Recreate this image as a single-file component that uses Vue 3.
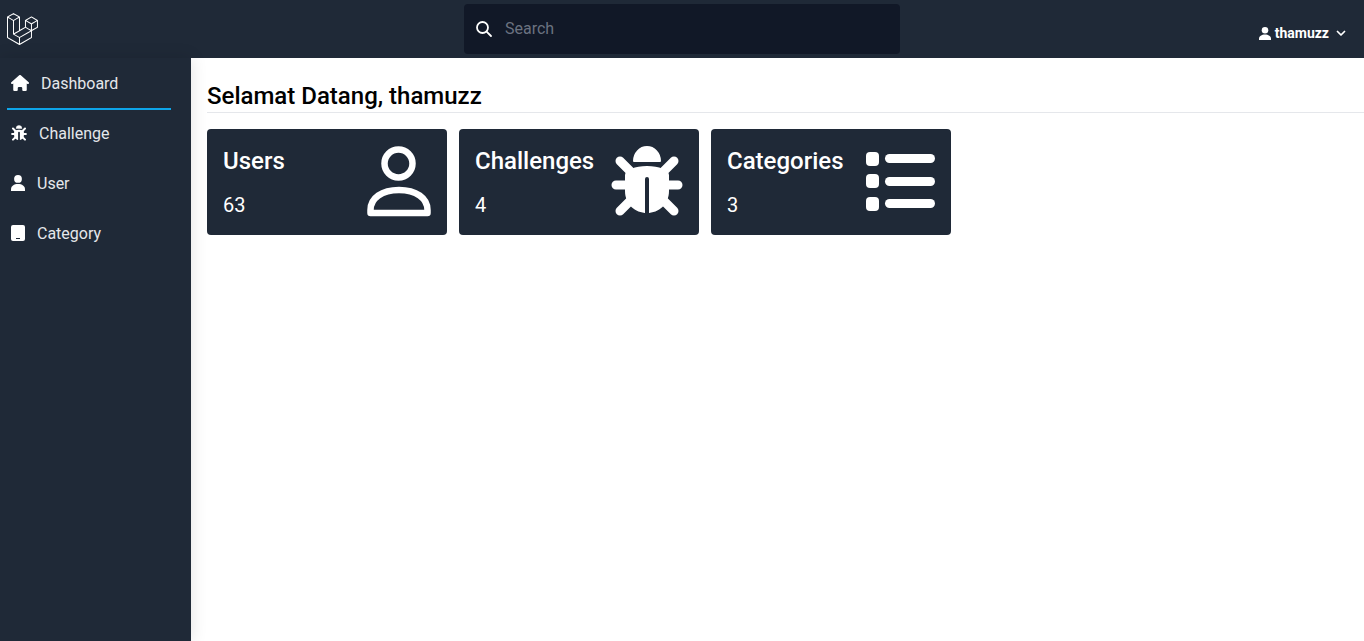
<template>
  <div class="page">
    <header class="topbar">
      <div class="logo">
        <svg width="31" height="32" viewBox="0 0 62 64" fill="#fff">
          <path fill-rule="evenodd" d="M61.8548 14.6253C61.8778 14.7102 61.8895 14.7978 61.8897 14.8858V28.5615C61.8898 28.737 61.8434 28.9095 61.7554 29.0614C61.6675 29.2132 61.5409 29.3392 61.3887 29.4265L49.9104 36.0351V49.1337C49.9104 49.4902 49.7209 49.8192 49.4118 49.9987L25.4519 63.7916C25.3971 63.8227 25.3372 63.8427 25.2774 63.8639C25.255 63.8714 25.2338 63.8851 25.2101 63.8913C25.0426 63.9354 24.8666 63.9354 24.6991 63.8913C24.6716 63.8838 24.6467 63.8689 24.6205 63.8589C24.5657 63.8389 24.5084 63.8215 24.456 63.7916L0.501061 49.9987C0.348882 49.9113 0.222437 49.7853 0.134469 49.6334C0.0465019 49.4816 0.000120578 49.3092 0 49.1337L0 8.10652C0 8.01678 0.0124642 7.92953 0.0348998 7.84477C0.0423783 7.8161 0.0598282 7.78993 0.0697995 7.76126C0.0884958 7.70891 0.105946 7.65531 0.133367 7.6067C0.152063 7.5743 0.179485 7.54812 0.20192 7.51821C0.230588 7.47832 0.256763 7.43719 0.290416 7.40229C0.319084 7.37362 0.356476 7.35243 0.388883 7.32751C0.425029 7.29759 0.457436 7.26518 0.498568 7.2415L12.4779 0.345059C12.6296 0.257786 12.8015 0.211853 12.9765 0.211853C13.1515 0.211853 13.3234 0.257786 13.475 0.345059L25.4531 7.2415H25.4556C25.4955 7.26643 25.5292 7.29759 25.5653 7.32626C25.5977 7.35119 25.6339 7.37362 25.6625 7.40104C25.6974 7.43719 25.7224 7.47832 25.7523 7.51821C25.7735 7.54812 25.8021 7.5743 25.8196 7.6067C25.8483 7.65656 25.8645 7.70891 25.8844 7.76126C25.8944 7.78993 25.9118 7.8161 25.9193 7.84602C25.9423 7.93096 25.954 8.01853 25.9542 8.10652V33.7317L35.9355 27.9844V14.8846C35.9355 14.7973 35.948 14.7088 35.9704 14.6253C35.9792 14.5954 35.9954 14.5692 36.0053 14.5405C36.0253 14.4882 36.0427 14.4346 36.0702 14.386C36.0888 14.3536 36.1163 14.3274 36.1375 14.2975C36.1674 14.2576 36.1923 14.2165 36.2272 14.1816C36.2559 14.1529 36.292 14.1317 36.3244 14.1068C36.3618 14.0769 36.3942 14.0445 36.4341 14.0208L48.4147 7.12434C48.5663 7.03694 48.7383 6.99094 48.9133 6.99094C49.0883 6.99094 49.2602 7.03694 49.4118 7.12434L61.3899 14.0208C61.4323 14.0457 61.4647 14.0769 61.5021 14.1055C61.5333 14.1305 61.5694 14.1529 61.5981 14.1803C61.633 14.2165 61.6579 14.2576 61.6878 14.2975C61.7103 14.3274 61.7377 14.3536 61.7551 14.386C61.7838 14.4346 61.8 14.4882 61.8199 14.5405C61.8312 14.5692 61.8474 14.5954 61.8548 14.6253ZM59.893 27.9844V16.6121L55.7013 19.0252L49.9104 22.3593V33.7317L59.8942 27.9844H59.893ZM47.9149 48.5566V37.1768L42.2187 40.4299L25.953 49.7133V61.2003L47.9149 48.5566ZM1.99677 9.83281V48.5566L23.9562 61.199V49.7145L12.4841 43.2219L12.4804 43.2194L12.4754 43.2169C12.4368 43.1945 12.4044 43.1621 12.3682 43.1347C12.3371 43.1097 12.3009 43.0898 12.2735 43.0624L12.271 43.0586C12.2386 43.0275 12.2162 42.9888 12.1887 42.9539C12.1638 42.9203 12.1339 42.8916 12.114 42.8567L12.1127 42.853C12.0903 42.8156 12.0766 42.7707 12.0604 42.7283C12.0442 42.6909 12.023 42.656 12.013 42.6161C12.0005 42.5688 11.998 42.5177 11.9931 42.4691C11.9881 42.4317 11.9781 42.3943 11.9781 42.3569V15.5801L6.18848 12.2446L1.99677 9.83281ZM12.9777 2.36177L2.99764 8.10652L12.9752 13.8513L22.9541 8.10527L12.9752 2.36177H12.9777ZM18.1678 38.2138L23.9574 34.8809V9.83281L19.7657 12.2459L13.9749 15.5801V40.6281L18.1678 38.2138ZM48.9133 9.14105L38.9344 14.8858L48.9133 20.6305L58.8909 14.8846L48.9133 9.14105ZM47.9149 22.3593L42.124 19.0252L37.9323 16.6121V27.9844L43.7219 31.3174L47.9149 33.7317V22.3593ZM24.9533 47.987L39.59 39.631L46.9065 35.4555L36.9352 29.7145L25.4544 36.3242L14.9907 42.3482L24.9533 47.987Z" />
        </svg>
      </div>
      <label class="search">
        <svg width="18" height="18" viewBox="0 0 18 18" fill="none" stroke="#fff" stroke-width="1.8" stroke-linecap="round">
          <circle cx="7.5" cy="7.5" r="5.5" />
          <path d="M11.6 11.6L16 16" />
        </svg>
        <input type="text" placeholder="Search" />
      </label>
      <div class="account">
        <svg width="12" height="13" viewBox="0 0 14 15" fill="#fff">
          <circle cx="7" cy="3.8" r="3.8" />
          <path d="M0 15v-1.5C0 10.5 3 8.6 7 8.6s7 1.9 7 4.9V15z" />
        </svg>
        <span class="account-name">thamuzz</span>
        <svg class="chevron" width="10" height="6" viewBox="0 0 10 6" fill="none" stroke="#fff" stroke-width="1.7" stroke-linecap="round" stroke-linejoin="round">
          <path d="M1.5 1.500L5 5l3.500-3.500" />
        </svg>
      </div>
    </header>

    <div class="body">
      <aside class="sidebar">
        <a class="nav-item active">
          <svg width="18" height="16" viewBox="2 2 16 16" preserveAspectRatio="none" fill="#fff">
            <path d="M10.707 2.293a1 1 0 00-1.414 0l-7 7a1 1 0 001.414 1.414L4 10.414V17a1 1 0 001 1h2a1 1 0 001-1v-2a1 1 0 011-1h2a1 1 0 011 1v2a1 1 0 001 1h2a1 1 0 001-1v-6.586l.293.293a1 1 0 001.414-1.414l-7-7z" />
          </svg>
          <span>Dashboard</span>
        </a>
        <a class="nav-item">
          <svg width="16" height="16" viewBox="0 0 72 72">
            <path fill="#fff" stroke="#fff" stroke-width="2" stroke-linejoin="round" d="M23 16a13 14 0 0 1 26 0z" />
            <path fill="#fff" fill-rule="evenodd" d="M14 30c0-5 10-9 22-9s22 4 22 9v16c0 13-10 22-22 22s-22-9-22-22zM32 34v34h8V34a4 4 0 0 0-8 0z" />
            <path stroke="#fff" stroke-width="9" stroke-linecap="round" d="M9 16l11 11M63 16L52 27M5 40h13M67 40H54M9 66l11-11M63 66L52 55" />
          </svg>
          <span>Challenge</span>
        </a>
        <a class="nav-item">
          <svg width="14" height="16" viewBox="0 0 14 16" fill="#fff">
            <circle cx="7" cy="3.9" r="3.9" />
            <path d="M0 16v-1.6C0 11 3 9 7 9s7 2 7 5.4V16z" />
          </svg>
          <span>User</span>
        </a>
        <a class="nav-item">
          <svg width="14" height="16" viewBox="0 0 14 16">
            <path fill="#fff" fill-rule="evenodd" d="M2 0h10a2 2 0 0 1 2 2v12a2 2 0 0 1-2 2H2a2 2 0 0 1-2-2V2a2 2 0 0 1 2-2zM5 13v1h4v-1z" />
          </svg>
          <span>Category</span>
        </a>
      </aside>

      <main class="main">
        <h1 class="greeting">Selamat Datang, thamuzz</h1>
        <div class="cards">
          <div class="card">
            <div>
              <div class="card-title">Users</div>
              <div class="card-value">63</div>
            </div>
            <svg width="64" height="72" viewBox="0 0 64 72" fill="none" stroke="#fff" stroke-width="6.5" stroke-linejoin="round">
              <circle cx="31.5" cy="18.5" r="14" />
              <path d="M3.500 68v-3C3.500 53 15 45 32 45s28.500 8 28.500 20v3z" />
            </svg>
          </div>
          <div class="card">
            <div>
              <div class="card-title">Challenges</div>
              <div class="card-value">4</div>
            </div>
            <svg width="72" height="72" viewBox="0 0 72 72">
              <path fill="#fff" stroke="#fff" stroke-width="2" stroke-linejoin="round" d="M23 16a13 14 0 0 1 26 0z" />
              <path fill="#fff" fill-rule="evenodd" d="M14 30c0-5 10-9 22-9s22 4 22 9v16c0 13-10 22-22 22s-22-9-22-22zM34 34v34h4V34a2 2 0 0 0-4 0z" />
              <path stroke="#fff" stroke-width="9" stroke-linecap="round" d="M9 16l11 11M63 16L52 27M5 40h13M67 40H54M9 66l11-11M63 66L52 55" />
            </svg>
          </div>
          <div class="card">
            <div>
              <div class="card-title">Categories</div>
              <div class="card-value">3</div>
            </div>
            <svg width="70" height="72" viewBox="0 0 70 72" fill="#fff">
              <rect x="1" y="7" width="13" height="14" rx="4" />
              <rect x="1" y="29" width="13" height="14" rx="4" />
              <rect x="1" y="52" width="13" height="14" rx="4" />
              <rect x="20" y="9" width="50" height="9" rx="4.5" />
              <rect x="20" y="32" width="50" height="9" rx="4.5" />
              <rect x="20" y="54" width="50" height="9" rx="4.5" />
            </svg>
          </div>
        </div>
      </main>
    </div>
  </div>
</template>

<script setup>
</script>

<style>
html,
body {
  margin: 0;
  background: #fff;
}
</style>

<style scoped>
.page {
  height: 641px;
  display: flex;
  flex-direction: column;
  overflow: hidden;
  font-family: Roboto, "Liberation Sans", sans-serif;
}

.topbar {
  height: 58px;
  flex: none;
  display: grid;
  grid-template-columns: 1fr 436px 1fr;
  background: #1f2937;
  color: #fff;
}

.logo {
  padding: 13px 0 0 7px;
}

.logo svg {
  display: block;
}

.search {
  height: 50px;
  margin-top: 4px;
  display: flex;
  align-items: center;
  gap: 12px;
  padding-left: 11px;
  background: #111827;
  border-radius: 4px;
}

.search input {
  flex: 1;
  min-width: 0;
  border: 0;
  outline: 0;
  padding: 0 0 2px;
  background: transparent;
  color: #fff;
  font: 400 16px Roboto, sans-serif;
}

.search input::placeholder {
  color: #6b7280;
}

.account {
  justify-self: end;
  align-self: start;
  display: flex;
  align-items: center;
  margin-top: 25px;
  padding-right: 18px;
  height: 16px;
}

.account-name {
  margin-left: 4px;
  font-size: 14px;
  font-weight: 700;
}

.chevron {
  margin-left: 7px;
}

.body {
  flex: 1;
  display: flex;
  min-height: 0;
}

.sidebar {
  width: 191px;
  flex: none;
  padding-left: 7px;
  box-sizing: border-box;
  background: #1f2937;
  box-shadow: 0 0 16px rgba(0, 0, 0, 0.12);
}

.nav-item {
  display: flex;
  align-items: center;
  gap: 12px;
  width: 164px;
  height: 50px;
  padding-left: 4px;
  box-sizing: border-box;
  color: #e5e7eb;
  font-size: 16px;
}

.nav-item.active {
  box-shadow: 0 2px 0 #0ea5e9;
}

.main {
  flex: 1;
  min-width: 0;
  padding-left: 16px;
}

.greeting {
  margin: 0;
  height: 55px;
  padding-top: 23px;
  box-sizing: border-box;
  border-bottom: 1px solid #e5e7eb;
  color: #000;
  font-size: 24px;
  font-weight: 500;
  line-height: 30px;
}

.cards {
  display: flex;
  gap: 12px;
  margin-top: 16px;
}

.card {
  width: 240px;
  height: 106px;
  padding: 16px;
  box-sizing: border-box;
  display: flex;
  justify-content: space-between;
  background: #1f2937;
  border-radius: 4px;
  color: #fff;
}

.card-title {
  font-size: 24px;
  font-weight: 500;
  line-height: 32px;
}

.card-value {
  margin-top: 14px;
  font-size: 20px;
  line-height: 28px;
}
</style>
